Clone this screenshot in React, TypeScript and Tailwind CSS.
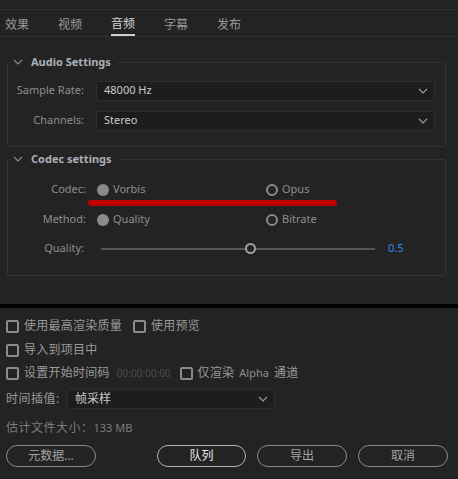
import React from "react";

const TABS = ["效果", "视频", "音频", "字幕", "发布"];
const FONT = { fontFamily: '"Noto Sans", "Noto Sans CJK SC", sans-serif' };

function Chevron({ className = "" }: { className?: string }) {
  return (
    <svg width="10" height="6" viewBox="0 0 10 6" className={className}>
      <path d="M1 1l4 4 4-4" fill="none" stroke="currentColor" strokeWidth="1.2" />
    </svg>
  );
}

function Select({ value }: { value: string }) {
  return (
    <div className="flex h-[20px] flex-1 items-center justify-between rounded-[2px] border border-[#2e2e2e] bg-[#1d1d1d] pl-[7px] pr-[6px] text-[11px] text-[#c9c9c9]">
      <span>{value}</span>
      <Chevron className="text-[#9a9a9a]" />
    </div>
  );
}

function Radio({ checked, label }: { checked?: boolean; label: string }) {
  return (
    <div className="flex items-center gap-[4px] text-[11px] text-[#8f8f8f]">
      {checked ? (
        <span className="h-[12px] w-[12px] rounded-full bg-[#8a8a8a]" />
      ) : (
        <span className="h-[12px] w-[12px] rounded-full border-2 border-[#8a8a8a]" />
      )}
      <span>{label}</span>
    </div>
  );
}

function Check({ label, children }: { label: string; children?: React.ReactNode }) {
  return (
    <div className="flex items-center gap-[5px] text-[12px] tracking-[0.25px] text-[#9a9a9a]">
      <span className="h-[13px] w-[13px] rounded-[2px] border-2 border-[#8a8a8a]" />
      <span>{label}</span>
      {children}
    </div>
  );
}

function Pill({ label, primary }: { label: string; primary?: boolean }) {
  return (
    <button
      className={
        primary
          ? "flex h-[22px] w-[89px] items-center justify-center rounded-full border-[1.5px] border-[#b5b5b5] text-[12px] text-[#e6e6e6]"
          : "flex h-[22px] w-[90px] items-center justify-center rounded-full border-[1.5px] border-[#8a8a8a] text-[12px] text-[#a3a3a3]"
      }
    >
      {label}
    </button>
  );
}

function Legend({ title }: { title: string }) {
  return (
    <legend className="ml-[3px] flex items-center gap-[8px] px-[2px] text-[11px] font-bold text-[#aab0ba]">
      <Chevron className="text-[#8a8a8a]" />
      <span className="pr-[4px]">{title}</span>
    </legend>
  );
}

export default function App() {
  return (
    <div className="relative h-[479px] w-[458px] overflow-hidden bg-[#232323]" style={FONT}>
      {/* tab strip */}
      <div className="h-[10px] border-b border-[#2f2f2f]" />
      <div className="flex h-[27px] items-end gap-[29px] border-b border-[#2f2f2f] pl-[5px]">
        {TABS.map((t) => (
          <div
            key={t}
            className={
              t === "音频"
                ? "flex h-[25px] w-[24px] items-center border-b-2 border-[#cfcfcf] pt-[2px] text-[12px] text-[#d2d2d2]"
                : "flex h-[25px] w-[24px] items-center pt-[2px] text-[12px] text-[#9a9a9a]"
            }
          >
            {t}
          </div>
        ))}
      </div>

      {/* export settings */}
      <div className="flex h-[267px] flex-col gap-[4px] px-[7px] pt-[17px]">
        <fieldset className="h-[93px] w-[439px] rounded-[2px] border border-[#333333]">
          <Legend title="Audio Settings" />
          <div className="flex flex-col gap-[10px] pr-[10px] pt-[10px]">
            <div className="flex items-center">
              <span className="w-[76px] text-right text-[11px] text-[#8e8e8e]">Sample Rate:</span>
              <div className="ml-[12px] flex flex-1">
                <Select value="48000 Hz" />
              </div>
            </div>
            <div className="flex items-center">
              <span className="w-[76px] text-right text-[11px] text-[#8e8e8e]">Channels:</span>
              <div className="ml-[12px] flex flex-1">
                <Select value="Stereo" />
              </div>
            </div>
          </div>
        </fieldset>

        <fieldset className="h-[125px] w-[439px] rounded-[2px] border border-[#333333]">
          <Legend title="Codec settings" />
          <div className="flex flex-col pt-[12px]">
            <div className="flex h-[20px] items-center">
              <span className="w-[78px] text-right text-[11px] text-[#8e8e8e]">Codec:</span>
              <div className="ml-[11px] w-[169px]">
                <Radio checked label="Vorbis" />
              </div>
              <Radio label="Opus" />
            </div>
            <div className="mt-[10px] flex h-[20px] items-center">
              <span className="w-[78px] text-right text-[11px] text-[#8e8e8e]">Method:</span>
              <div className="ml-[11px] w-[169px]">
                <Radio checked label="Quality" />
              </div>
              <Radio label="Bitrate" />
            </div>
            <div className="mt-[9px] flex h-[20px] items-center">
              <span className="w-[76px] text-right text-[11px] text-[#8e8e8e]">Quality:</span>
              <div className="relative ml-[17px] flex h-[12px] w-[274px] items-center">
                <div className="h-[2px] w-full bg-[#555555]" />
                <span className="absolute left-[144px] h-[11px] w-[11px] rounded-full border-2 border-[#a0a0a0] bg-[#232323]" />
              </div>
              <span className="ml-[13px] text-[11px] text-[#2f8ae6]">0.5</span>
            </div>
          </div>
        </fieldset>
      </div>

      {/* red marker stroke across the codec row */}
      <div className="absolute left-[88px] top-[200px] h-[6px] w-[249px] rounded-full bg-[#c00000]" />

      <div className="h-[4px] bg-black" />

      {/* output options */}
      <div className="flex flex-col px-[6px] pt-[9px]">
        <div className="flex h-[18px] items-center gap-[11px]">
          <Check label="使用最高渲染质量" />
          <Check label="使用预览" />
        </div>
        <div className="mt-[6px] flex h-[18px] items-center">
          <Check label="导入到项目中" />
        </div>
        <div className="mt-[5px] flex h-[18px] items-center">
          <Check label="设置开始时间码">
            <span className="ml-[2px] text-[10px] tracking-normal text-[#4b4b4b]">00:00:00:00</span>
          </Check>
          <div className="ml-[9px]">
            <Check label="仅渲染">
              <span className="text-[11px] tracking-normal text-[#8e8e8e]">Alpha</span>
              <span>通道</span>
            </Check>
          </div>
        </div>
        <div className="mt-[7px] flex h-[20px] items-center text-[12px] text-[#9a9a9a]">
          <span className="w-[61px] tracking-[0.5px]">时间插值:</span>
          <div className="flex h-[20px] w-[208px] items-center justify-between rounded-[2px] border border-[#2e2e2e] bg-[#1d1d1d] pl-[7px] pr-[6px] text-[#c9c9c9]">
            <span>帧采样</span>
            <Chevron className="text-[#9a9a9a]" />
          </div>
        </div>
        <div className="mt-[10px] flex h-[18px] items-center text-[12px] tracking-[0.5px] text-[#7e7e7e]">
          <span>估计文件大小：</span>
          <span className="text-[11px] tracking-normal">133 MB</span>
        </div>
        <div className="mt-[8px] flex items-center">
          <Pill label="元数据..." />
          <div className="ml-[61px]">
            <Pill primary label="队列" />
          </div>
          <div className="ml-[11px]">
            <Pill label="导出" />
          </div>
          <div className="ml-[11px]">
            <Pill label="取消" />
          </div>
        </div>
      </div>
    </div>
  );
}
